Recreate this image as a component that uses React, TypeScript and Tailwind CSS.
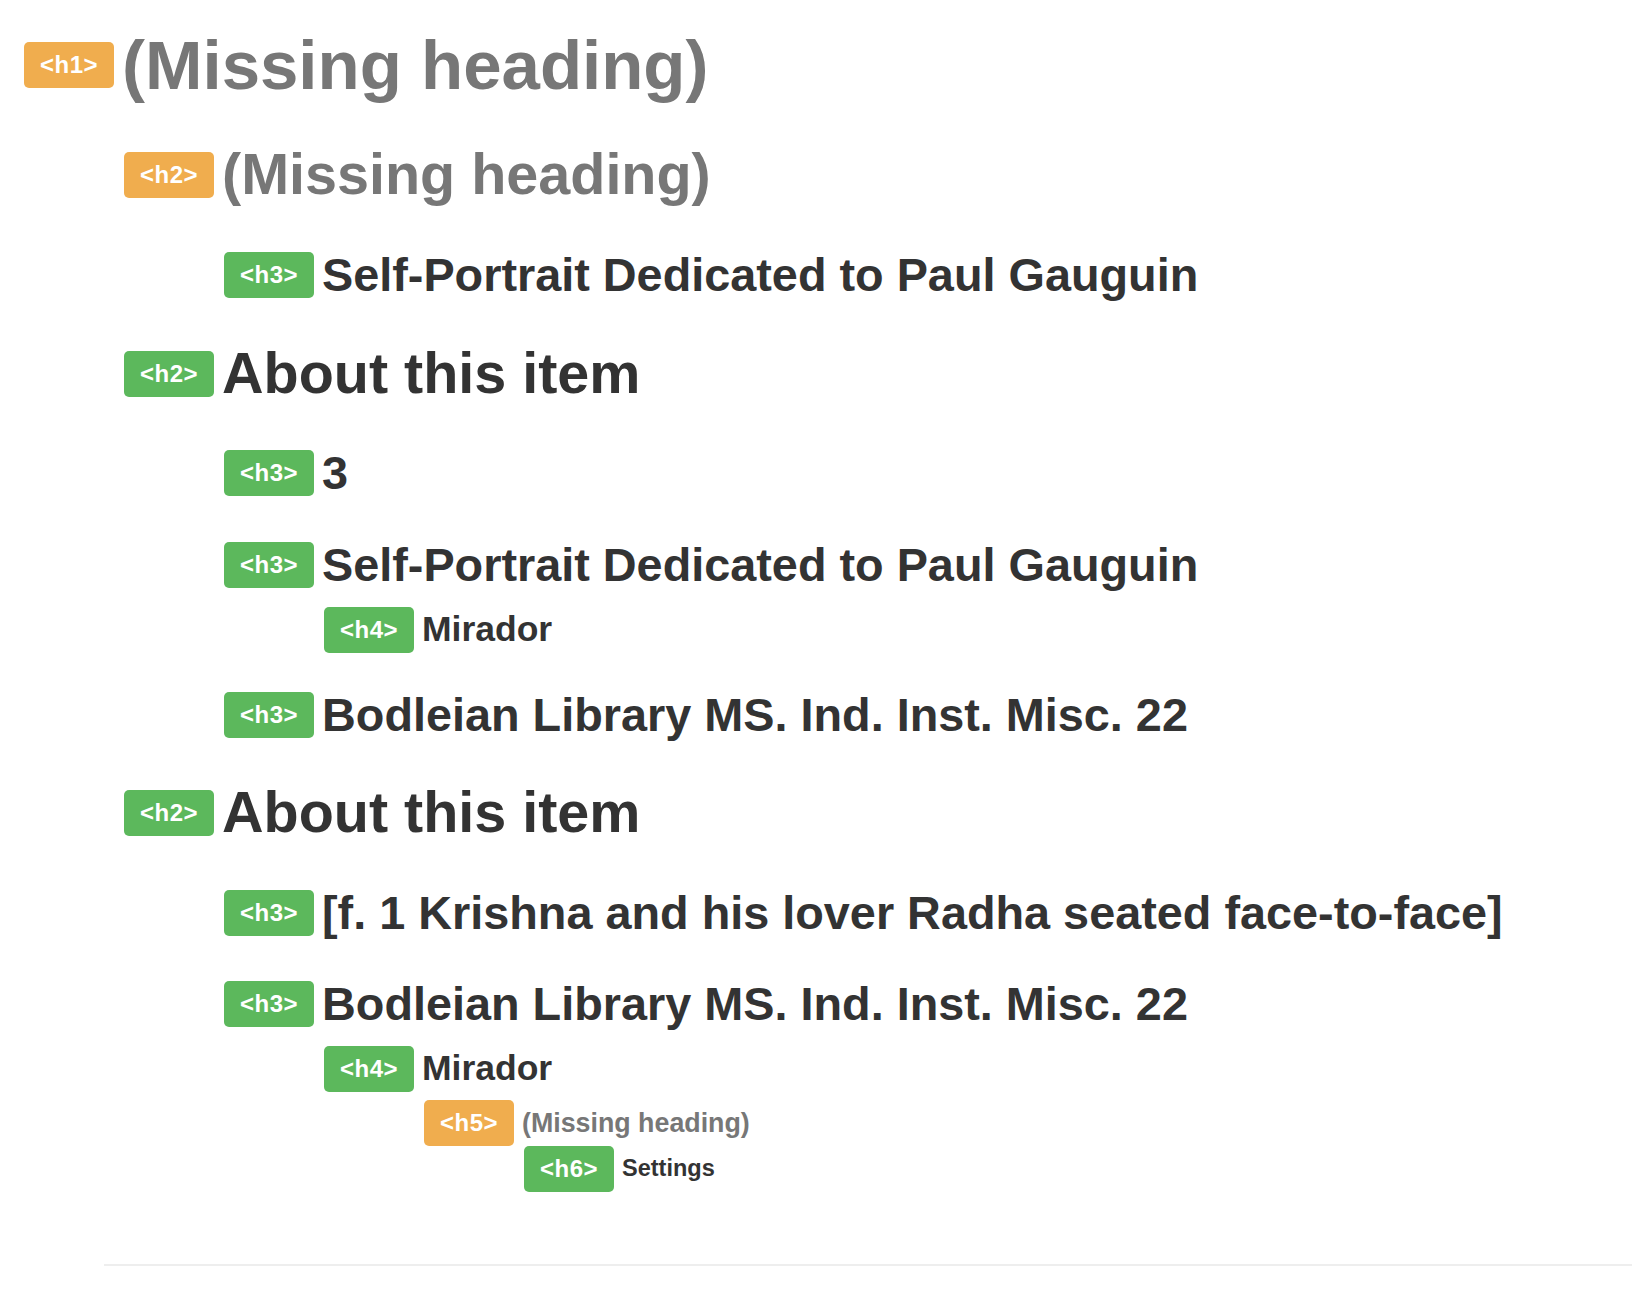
import React from "react";

type Row = {
  level: 1 | 2 | 3 | 4 | 5 | 6;
  text: string;
  missing?: boolean;
  mt: string;
};

const indent: Record<number, string> = {
  1: "ml-[24px]",
  2: "ml-[124px]",
  3: "ml-[224px]",
  4: "ml-[324px]",
  5: "ml-[424px]",
  6: "ml-[524px]",
};

const size: Record<number, string> = {
  1: "text-[69px]",
  2: "text-[57.5px]",
  3: "text-[46.8px]",
  4: "text-[35.5px]",
  5: "text-[26.8px]",
  6: "text-[23.5px]",
};

const rows: Row[] = [
  { level: 1, text: "(Missing heading)", missing: true, mt: "mt-0" },
  { level: 2, text: "(Missing heading)", missing: true, mt: "mt-[64px]" },
  { level: 3, text: "Self-Portrait Dedicated to Paul Gauguin", mt: "mt-[54px]" },
  { level: 2, text: "About this item", mt: "mt-[53px]" },
  { level: 3, text: "3", mt: "mt-[53px]" },
  { level: 3, text: "Self-Portrait Dedicated to Paul Gauguin", mt: "mt-[46px]" },
  { level: 4, text: "Mirador", mt: "mt-[19px]" },
  { level: 3, text: "Bodleian Library MS. Ind. Inst. Misc. 22", mt: "mt-[39px]" },
  { level: 2, text: "About this item", mt: "mt-[52px]" },
  { level: 3, text: "[f. 1 Krishna and his lover Radha seated face-to-face]", mt: "mt-[54px]" },
  { level: 3, text: "Bodleian Library MS. Ind. Inst. Misc. 22", mt: "mt-[45px]" },
  { level: 4, text: "Mirador", mt: "mt-[19px]" },
  { level: 5, text: "(Missing heading)", missing: true, mt: "mt-[8px]" },
  { level: 6, text: "Settings", mt: "mt-0" },
];

function HeadingRow({ row }: { row: Row }) {
  return (
    <div className={`flex h-[46px] items-center gap-2 ${indent[row.level]} ${row.mt}`}>
      <span
        className={`flex h-[46px] w-[90px] shrink-0 items-center justify-center rounded-[5px] text-[24px] font-bold leading-none tracking-[0.5px] text-white ${
          row.missing ? "bg-[#f0ad4e]" : "bg-[#5cb85c]"
        }`}
      >
        {`<h${row.level}>`}
      </span>
      <span
        className={`whitespace-nowrap font-bold leading-none ${size[row.level]} ${
          row.missing ? "text-[#777777]" : "text-[#333333]"
        }`}
      >
        {row.text}
      </span>
    </div>
  );
}

export default function App() {
  return (
    <div className="min-h-[1300px] bg-white pt-[42px] font-['Liberation_Sans',Arial,sans-serif]">
      {rows.map((r, i) => (
        <HeadingRow key={i} row={r} />
      ))}
      <div className="ml-[104px] mt-[72px] h-[2px] bg-[#eeeeee]" />
    </div>
  );
}
